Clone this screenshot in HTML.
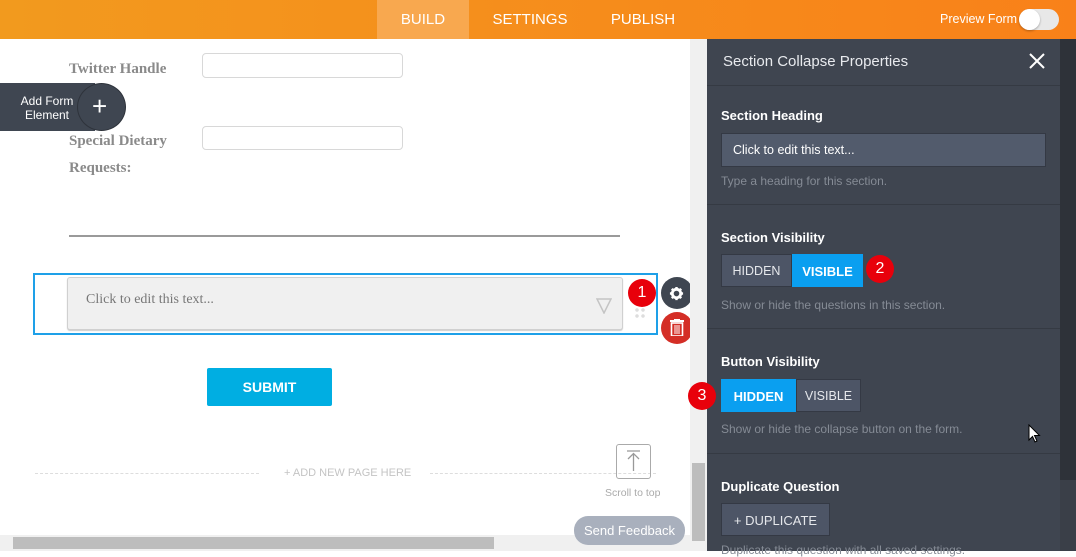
<!DOCTYPE html>
<html><head><meta charset="utf-8"><style>
*{box-sizing:border-box;margin:0;padding:0}
body{width:1076px;height:551px;overflow:hidden;position:relative;background:#fff;font-family:"Liberation Sans",sans-serif}
.top{position:absolute;left:0;top:0;width:1076px;height:39px;background:linear-gradient(90deg,#f29a1e,#f98119)}
.tab{position:absolute;top:0;height:39px;line-height:40px;color:#fff;font-size:15px;text-align:center}
.lbl{position:absolute;font-family:"Liberation Serif",serif;font-weight:bold;color:#8a8a8a;font-size:15px}
.inp{position:absolute;border:1px solid #d8d8d8;border-radius:4px;background:#fff}
.panel{position:absolute;left:707px;top:39px;width:353px;height:512px;background:#3f4550}
.sec{position:absolute;left:0;width:353px;border-top:1px solid #353a43}
.h{position:absolute;left:14px;color:#fff;font-weight:bold;font-size:13px}
.d{position:absolute;left:14px;color:#858b95;font-size:12px}
.btn{position:absolute;height:33px;line-height:33px;font-size:12.5px;text-align:center;color:#e6e8ec;background:#4d5566;border:1px solid #343944}
.on{background:#0a9ff0;color:#fff;font-weight:bold;font-size:13px;border-color:#0a9ff0}
.badge{position:absolute;width:28px;height:28px;border-radius:50%;background:#e8000b;color:#fff;font-size:16px;text-align:center;line-height:28px}
</style></head><body>
<div class="top">
<div class="tab" style="left:377px;width:92px;background:#f8a84f">BUILD</div>
<div class="tab" style="left:480px;width:100px">SETTINGS</div>
<div class="tab" style="left:600px;width:86px">PUBLISH</div>
<div style="position:absolute;left:940px;top:12px;color:#fff;font-size:12.5px">Preview Form</div>
<div style="position:absolute;left:1019px;top:9px;width:40px;height:21px;border-radius:11px;background:#e8e8e8"></div>
<div style="position:absolute;left:1019px;top:9px;width:21px;height:21px;border-radius:50%;background:#fff;box-shadow:0 1px 2px rgba(0,0,0,.3)"></div>
</div>

<div class="lbl" style="left:69px;top:61px">Twitter Handle</div>
<div class="inp" style="left:202px;top:53px;width:201px;height:25px"></div>
<div class="lbl" style="left:69px;top:133px">Special Dietary</div>
<div class="lbl" style="left:69px;top:160px">Requests:</div>
<div class="inp" style="left:202px;top:126px;width:201px;height:24px"></div>
<div style="position:absolute;left:69px;top:235px;width:551px;height:2px;background:#9a9a9a"></div>

<div style="position:absolute;left:0;top:83px;width:95px;height:48px;background:#3f4651"></div>
<div style="position:absolute;left:77px;top:83px;width:49px;height:48px;border-radius:50%;background:#3f4651;border:1px solid #2e333b"></div>
<div style="position:absolute;left:6px;top:94px;width:82px;color:#fff;font-size:12px;text-align:center;line-height:14px">Add Form<br>Element</div>
<div style="position:absolute;left:92px;top:93px;color:#fff;font-size:26px;line-height:26px;font-weight:300">+</div>

<div style="position:absolute;left:33px;top:273px;width:625px;height:62px;border:2px solid #1ea0e8"></div>
<div style="position:absolute;left:67px;top:277px;width:556px;height:53px;background:#f0f0f0;border:1px solid #d0d0d0;border-radius:3px;box-shadow:0 1px 1px #ccc"></div>
<div style="position:absolute;left:86px;top:292px;font-family:'Liberation Serif',serif;color:#777;font-size:14px">Click to edit this text...</div>
<svg style="position:absolute;left:596px;top:298px" width="16" height="16"><path d="M1 1 L15 1 L8 15 Z" fill="none" stroke="#c4c4c4" stroke-width="1.5"/></svg>
<div style="position:absolute;left:634px;top:307px;width:12px;height:12px;background:radial-gradient(circle,#ddd 1.5px,transparent 2px) 0 0/6px 6px"></div>
<div class="badge" style="left:628px;top:279px">1</div>
<div style="position:absolute;left:661px;top:277px;width:32px;height:32px;border-radius:50%;background:#3f4651"></div>
<svg style="position:absolute;left:669px;top:286px" width="15" height="15" viewBox="0 0 16 16"><circle cx="8" cy="8" r="4.5" fill="none" stroke="#fff" stroke-width="3"/><path d="M8 1v3M8 12v3M1 8h3M12 8h3M3 3l2 2M11 11l2 2M13 3l-2 2M5 11l-2 2" stroke="#fff" stroke-width="2.6"/></svg>
<div style="position:absolute;left:661px;top:312px;width:32px;height:32px;border-radius:50%;background:#d42e26"></div>
<svg style="position:absolute;left:670px;top:319px" width="14" height="17"><rect x="0" y="1" width="14" height="2" fill="#fff"/><rect x="4" y="0" width="6" height="2" fill="#fff"/><rect x="1.5" y="4" width="11" height="13" fill="none" stroke="#fff" stroke-width="1.6"/><path d="M5 6v9M7 6v9M9 6v9" stroke="#fff" stroke-width="1"/></svg>

<div style="position:absolute;left:207px;top:368px;width:125px;height:38px;background:#00aee2;border-radius:2px;color:#fff;font-weight:bold;font-size:14px;text-align:center;line-height:38px">SUBMIT</div>

<div style="position:absolute;left:35px;top:473px;width:224px;border-top:1px dashed #ddd"></div>
<div style="position:absolute;left:430px;top:473px;width:226px;border-top:1px dashed #ddd"></div>
<div style="position:absolute;left:284px;top:467px;color:#c4c4c4;font-size:11px">+ ADD NEW PAGE HERE</div>
<div style="position:absolute;left:616px;top:444px;width:35px;height:35px;border:1.5px solid #aaa;border-radius:3px"></div>
<svg style="position:absolute;left:616px;top:444px" width="35" height="35"><path d="M11 7h13M17.5 10v17M12 15l5.5-5.5 5.5 5.5" fill="none" stroke="#999" stroke-width="1.3"/></svg>
<div style="position:absolute;left:605px;top:487px;color:#aaa;font-size:10.5px">Scroll to top</div>

<div style="position:absolute;left:690px;top:39px;width:17px;height:512px;background:#f0f0f0"></div>
<div style="position:absolute;left:692px;top:463px;width:13px;height:78px;background:#bdbdbd"></div>
<div style="position:absolute;left:0;top:535px;width:690px;height:16px;background:#f0f0f0"></div>
<div style="position:absolute;left:13px;top:537px;width:481px;height:12px;background:#bdbdbd"></div>
<div style="position:absolute;left:574px;top:516px;width:111px;height:29px;border-radius:14px;background:#a9b0bd;color:#fff;font-size:13px;text-align:center;line-height:29px">Send Feedback</div>

<div class="panel">
<div style="position:absolute;left:16px;top:14px;color:#e8eaee;font-size:15px">Section Collapse Properties</div>
<svg style="position:absolute;left:322px;top:14px" width="16" height="16"><path d="M1 1L15 15M15 1L1 15" stroke="#fff" stroke-width="2"/></svg>
<div class="sec" style="top:46px;height:120px"></div>
<div class="h" style="top:69px">Section Heading</div>
<div style="position:absolute;left:14px;top:94px;width:325px;height:34px;background:#525b6c;border:1px solid #343944;color:#fff;font-size:12.5px;line-height:32px;padding-left:11px">Click to edit this text...</div>
<div class="d" style="top:135px">Type a heading for this section.</div>
<div class="sec" style="top:165px;height:120px"></div>
<div class="h" style="top:191px">Section Visibility</div>
<div class="btn" style="left:14px;top:215px;width:71px">HIDDEN</div>
<div class="btn on" style="left:85px;top:215px;width:71px">VISIBLE</div>
<div class="d" style="top:259px">Show or hide the questions in this section.</div>
<div class="sec" style="top:289px;height:120px"></div>
<div class="h" style="top:315px">Button Visibility</div>
<div class="btn on" style="left:14px;top:340px;width:75px">HIDDEN</div>
<div class="btn" style="left:89px;top:340px;width:65px">VISIBLE</div>
<div class="d" style="top:383px">Show or hide the collapse button on the form.</div>
<div class="sec" style="top:414px;height:100px"></div>
<div class="h" style="top:440px">Duplicate Question</div>
<div class="btn" style="left:14px;top:464px;width:109px;font-size:13px">+ DUPLICATE</div>
<div class="d" style="top:504px">Duplicate this question with all saved settings.</div>
<svg style="position:absolute;left:321px;top:385px" width="14" height="20"><path d="M1 1L1 16L4.5 12.5L7 18L9 17L6.5 11.5L11.5 11.5Z" fill="#fff" stroke="#000" stroke-width="1"/></svg>
</div>
<div style="position:absolute;left:1060px;top:39px;width:16px;height:441px;background:#2e3239"></div>
<div style="position:absolute;left:1060px;top:480px;width:16px;height:71px;background:#3a3f48"></div>
<div class="badge" style="left:866px;top:255px">2</div>
<div class="badge" style="left:688px;top:382px">3</div>
</body></html>
